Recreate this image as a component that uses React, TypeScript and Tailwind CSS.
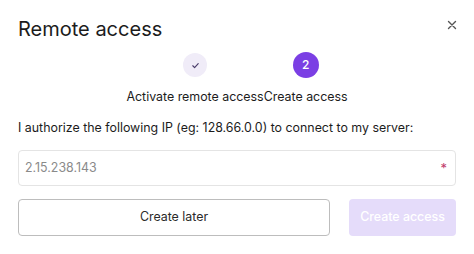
export default function App() {
  return (
    <div className="w-[474px] h-[254px] bg-white px-[18px] pt-[15px] font-['Inter',sans-serif] text-[#1c1c1c]">
      <div className="flex items-start justify-between">
        <h1 className="text-[20px] leading-[28px] font-normal">Remote access</h1>
        <button className="mt-[4px] -mr-[2px] text-[#555]" aria-label="Close">
          <svg width="12" height="12" viewBox="0 0 12 12" fill="none">
            <path d="M2.5 2.5l7 7M9.5 2.5l-7 7" stroke="currentColor" strokeWidth="1.4" strokeLinecap="round" />
          </svg>
        </button>
      </div>

      <div className="flex justify-center mt-[10px]">
        <div className="flex flex-col items-center">
          <div className="size-[24px] rounded-full bg-[#f0ecf8] flex items-center justify-center text-[#4b3d6b]">
            <svg width="9" height="9" viewBox="0 0 10 10" fill="none">
              <path d="M2 5.3l2 2L8 3" stroke="currentColor" strokeWidth="1.3" strokeLinecap="round" strokeLinejoin="round" />
            </svg>
          </div>
          <span className="mt-[11px] text-[12.4px] leading-[18px]">Activate remote access</span>
        </div>
        <div className="flex flex-col items-center">
          <div className="size-[26px] -mt-[1px] rounded-full bg-[#7b3fe4] flex items-center justify-center text-white text-[12px] font-medium">
            2
          </div>
          <span className="mt-[10px] text-[12.4px] leading-[18px]">Create access</span>
        </div>
      </div>

      <p className="mt-[13px] text-[12.4px] leading-[18px]">
        I authorize the following IP (eg: 128.66.0.0) to connect to my server:
      </p>

      <div className="mt-[13px] h-[36px] rounded-[4px] border border-[#e4e4e4] flex items-center justify-between pl-[6px] pr-[8px]">
        <span className="text-[12.4px] text-[#8a8a8a]">2.15.238.143</span>
        <span className="text-[13px] text-[#c03a6a] leading-none">*</span>
      </div>

      <div className="mt-[13px] flex gap-[19px]">
        <button className="w-[312px] h-[37px] rounded-[4px] border border-[#bdbdbd] text-[12.4px] text-[#2a2a2a]">
          Create later
        </button>
        <button className="flex-1 h-[37px] rounded-[4px] bg-[#e5dcfa] text-[12.4px] font-medium text-white">
          Create access
        </button>
      </div>
    </div>
  );
}
